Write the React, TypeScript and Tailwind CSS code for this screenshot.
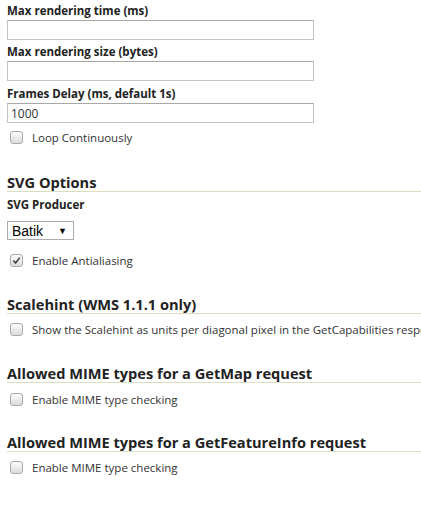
import React, { useState } from 'react';

const font = { fontFamily: '"Open Sans", "Liberation Sans", sans-serif' };

const Checkbox = ({ checked, onChange }: { checked: boolean; onChange: () => void }) => (
  <button
    type="button"
    onClick={onChange}
    className="w-[13px] h-[13px] rounded-[3px] border border-[#aaa] bg-gradient-to-b from-[#fcfcfc] to-[#dcdcdc] flex items-center justify-center shrink-0"
  >
    {checked && (
      <svg viewBox="0 0 10 10" className="w-[9px] h-[9px]">
        <path d="M1.5 5.2 L4 7.8 L8.6 1.8" fill="none" stroke="#444" strokeWidth="1.8" />
      </svg>
    )}
  </button>
);

const CheckRow = ({ label, checked, onChange, className = '' }: { label: string; checked: boolean; onChange: () => void; className?: string }) => (
  <div className={`flex items-center -ml-[7px] pl-[10px] h-[13px] whitespace-nowrap ${className}`}>
    <Checkbox checked={checked} onChange={onChange} />
    <span className="ml-[9px] text-[11.5px] text-[#333] leading-none">{label}</span>
  </div>
);

const FieldLabel = ({ children, className = '' }: { children: React.ReactNode; className?: string }) => (
  <div className={`h-[13px] text-[11.5px] font-bold text-[#222] leading-[13px] ${className}`}>{children}</div>
);

const TextInput = ({ value, onChange, className = '' }: { value: string; onChange: (v: string) => void; className?: string }) => (
  <input
    value={value}
    onChange={(e) => onChange(e.target.value)}
    className={`block w-[307px] h-[20px] border border-[#c4c4c4] border-t-[#a8a8a8] px-[3px] text-[12px] text-[#333] outline-none ${className}`}
  />
);

const SectionTitle = ({ children, className = '' }: { children: React.ReactNode; className?: string }) => (
  <div className={`h-[19px] border-b border-[#dcdcbf] text-[14.6px] font-bold text-[#222] leading-[18px] whitespace-nowrap ${className}`}>
    {children}
  </div>
);

export default function App() {
  const [maxTime, setMaxTime] = useState('');
  const [maxSize, setMaxSize] = useState('');
  const [delay, setDelay] = useState('1000');
  const [loop, setLoop] = useState(false);
  const [antialias, setAntialias] = useState(true);
  const [scalehint, setScalehint] = useState(false);
  const [mimeMap, setMimeMap] = useState(false);
  const [mimeInfo, setMimeInfo] = useState(false);

  return (
    <div className="w-[421px] h-[519px] bg-white overflow-hidden pl-[7px] pt-[4px]" style={font}>
      {/* Animator options */}
      <FieldLabel>Max rendering time (ms)</FieldLabel>
      <TextInput value={maxTime} onChange={setMaxTime} className="mt-[3px]" />
      <FieldLabel className="mt-[5px]">Max rendering size (bytes)</FieldLabel>
      <TextInput value={maxSize} onChange={setMaxSize} className="mt-[3px]" />
      <FieldLabel className="mt-[6px]">Frames Delay (ms, default 1s)</FieldLabel>
      <TextInput value={delay} onChange={setDelay} className="mt-[3px]" />
      <CheckRow label="Loop Continuously" checked={loop} onChange={() => setLoop(!loop)} className="mt-[8px]" />

      {/* SVG Options */}
      <SectionTitle className="mt-[29px]">SVG Options</SectionTitle>
      <FieldLabel className="mt-[6px]">SVG Producer</FieldLabel>
      <div className="mt-[10px] w-[67px] h-[19px] border border-[#aaa] flex items-center justify-between pl-[4px] pr-[6px]">
        <span className="text-[14px] text-black leading-none" style={{ fontFamily: '"Liberation Sans", sans-serif' }}>Batik</span>
        <span className="text-[9px] text-black leading-none">▼</span>
      </div>
      <CheckRow label="Enable Antialiasing" checked={antialias} onChange={() => setAntialias(!antialias)} className="mt-[14px]" />

      <SectionTitle className="mt-[28px]">Scalehint (WMS 1.1.1 only)</SectionTitle>
      <CheckRow
        label="Show the Scalehint as units per diagonal pixel in the GetCapabilities response"
        checked={scalehint}
        onChange={() => setScalehint(!scalehint)}
        className="mt-[9px]"
      />

      <SectionTitle className="mt-[28px]">Allowed MIME types for a GetMap request</SectionTitle>
      <CheckRow label="Enable MIME type checking" checked={mimeMap} onChange={() => setMimeMap(!mimeMap)} className="mt-[10px]" />

      <SectionTitle className="mt-[27px]">Allowed MIME types for a GetFeatureInfo request</SectionTitle>
      <CheckRow label="Enable MIME type checking" checked={mimeInfo} onChange={() => setMimeInfo(!mimeInfo)} className="mt-[9px]" />
    </div>
  );
}
